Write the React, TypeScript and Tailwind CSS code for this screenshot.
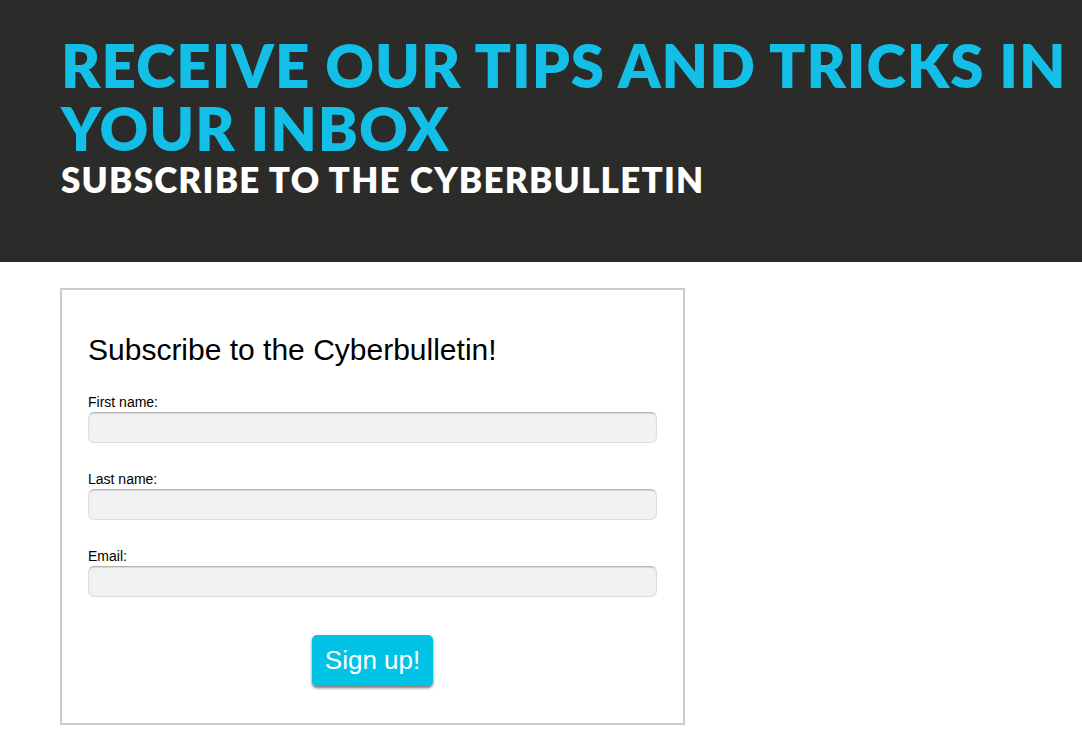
const Field = ({ label }: { label: string }) => {
  return (
    <div className="flex flex-col">
      <label className="text-[14px] leading-[16px] text-black">{label}</label>
      <input
        type="text"
        className="mt-[2px] h-[31px] w-full rounded-[6px] border border-[#dcdddc] border-t-[#b5b5b5] bg-[#f1f2f1] shadow-[inset_0_1px_1px_rgba(0,0,0,0.12)] outline-none"
      />
    </div>
  );
};

export default function App() {
  return (
    <div className="min-h-[747px] bg-white font-['Liberation_Sans',Arial,sans-serif]">
      <header className="h-[262px] bg-[#2b2b2a] pl-[61px] pt-[34px] font-['Lato',sans-serif]">
        <h1 className="whitespace-nowrap text-[60px] font-extrabold leading-[63px] tracking-[1px] text-[#13bfe7]">
          RECEIVE OUR TIPS AND TRICKS IN
          <br />
          YOUR INBOX
        </h1>
        <h2 className="whitespace-nowrap text-[35px] font-extrabold leading-[38px] tracking-[1.2px] text-white">
          SUBSCRIBE TO THE CYBERBULLETIN
        </h2>
      </header>

      <main className="pl-[60px] pt-[26px]">
        <form className="flex w-[625px] flex-col border-2 border-[#cccccc] px-[26px] pb-[37px] pt-[44px]">
          <h3 className="text-[30px] leading-[32px] text-black">Subscribe to the Cyberbulletin!</h3>
          <div className="mt-[28px] flex flex-col gap-[28px]">
            <Field label="First name:" />
            <Field label="Last name:" />
            <Field label="Email:" />
          </div>
          <div className="mt-[38px] flex justify-center">
            <button
              type="button"
              className="h-[51px] rounded-[5px] bg-[#00c3e6] px-[13px] text-[26px] text-white shadow-[0_2px_3px_rgba(0,0,0,0.55)]"
            >
              Sign up!
            </button>
          </div>
        </form>
      </main>
    </div>
  );
}
